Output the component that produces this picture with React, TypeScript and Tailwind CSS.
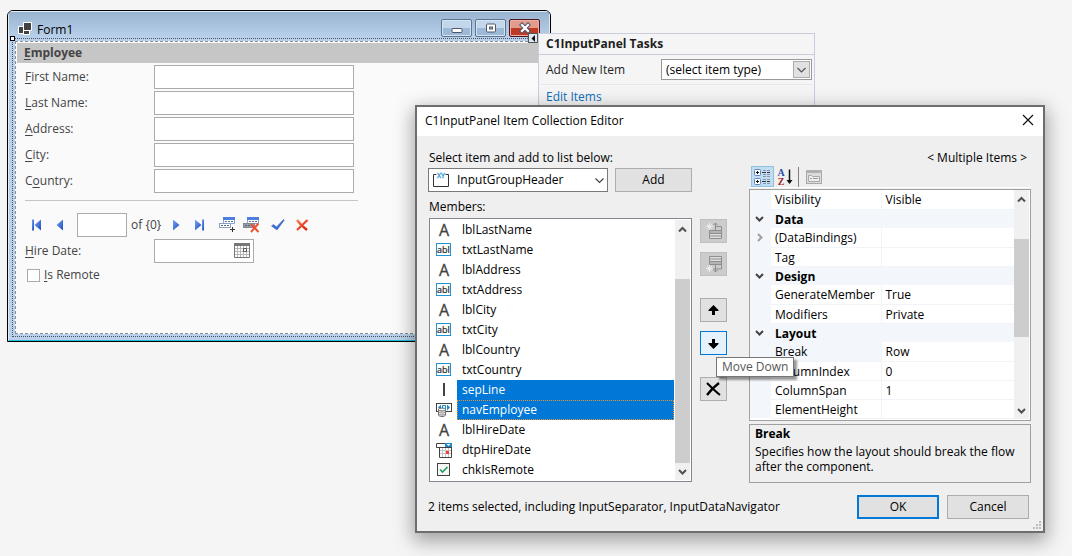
import { useState } from "react";
import type { ReactNode } from "react";

type MemberKind = "label" | "text" | "line" | "nav" | "date" | "check";

const members: { name: string; kind: MemberKind }[] = [
  { name: "lblLastName", kind: "label" },
  { name: "txtLastName", kind: "text" },
  { name: "lblAddress", kind: "label" },
  { name: "txtAddress", kind: "text" },
  { name: "lblCity", kind: "label" },
  { name: "txtCity", kind: "text" },
  { name: "lblCountry", kind: "label" },
  { name: "txtCountry", kind: "text" },
  { name: "sepLine", kind: "line" },
  { name: "navEmployee", kind: "nav" },
  { name: "lblHireDate", kind: "label" },
  { name: "dtpHireDate", kind: "date" },
  { name: "chkIsRemote", kind: "check" },
];

type PropRow = { name: string; value?: string; category?: boolean; expandable?: boolean; current?: boolean };

const properties: PropRow[] = [
  { name: "Visibility", value: "Visible" },
  { name: "Data", category: true },
  { name: "(DataBindings)", value: "", expandable: true },
  { name: "Tag", value: "" },
  { name: "Design", category: true },
  { name: "GenerateMember", value: "True" },
  { name: "Modifiers", value: "Private" },
  { name: "Layout", category: true },
  { name: "Break", value: "Row", current: true },
  { name: "ColumnIndex", value: "0" },
  { name: "ColumnSpan", value: "1" },
  { name: "ElementHeight", value: "" },
];

const fields: { id: string; before: string; key: string; after: string }[] = [
  { id: "first", before: "", key: "F", after: "irst Name:" },
  { id: "last", before: "", key: "L", after: "ast Name:" },
  { id: "address", before: "", key: "A", after: "ddress:" },
  { id: "city", before: "", key: "C", after: "ity:" },
  { id: "country", before: "C", key: "o", after: "untry:" },
];

function Mnemonic({ before = "", letter, after }: { before?: string; letter: string; after: string }) {
  return (
    <>
      {before}
      <span className="underline underline-offset-2">{letter}</span>
      {after}
    </>
  );
}

function Chevron({ dir, className = "" }: { dir: "up" | "down" | "right"; className?: string }) {
  const d = { up: "M1 6.5 4.5 3 8 6.5", down: "M1 3 4.5 6.5 8 3", right: "M3 1 6.5 4.5 3 8" }[dir];
  return (
    <svg width="9" height="9" viewBox="0 0 9 9" className={className} aria-hidden="true">
      <path d={d} fill="none" stroke="currentColor" strokeWidth="2" />
    </svg>
  );
}

function MemberIcon({ kind }: { kind: MemberKind }) {
  return (
    <svg width="16" height="16" viewBox="0 0 16 16" aria-hidden="true" className="shrink-0">
      {kind === "label" && (
        <text x="8" y="14" textAnchor="middle" fontSize="16" fill="#424242" stroke="#424242" strokeWidth=".3">
          A
        </text>
      )}
      {kind === "text" && (
        <>
          <rect x=".5" y="1.5" width="14" height="12" fill="#fff" stroke="#1e95d4" />
          <text x="7.5" y="11" textAnchor="middle" fontSize="9" fill="#222" stroke="#222" strokeWidth=".2">
            abl
          </text>
        </>
      )}
      {kind === "line" && <path d="M8 1v13" stroke="#424242" strokeWidth="2" />}
      {kind === "nav" && (
        <>
          <rect x=".5" y="1.5" width="15" height="8" fill="#fff" stroke="#424242" />
          <path d="M5 2.500v6L2 5.500zM11 2.500v6l3-3z" fill="#1e88c9" />
          <path d="M6.500 3.500h3v4h-3z" fill="#fff" stroke="#1e88c9" />
          <path d="M2.500 7.500V13c0 .8 1.500 1.500 3.500 1.500S9.500 13.800 9.500 13V7.500z" fill="#f2f2f2" stroke="#666" />
          <ellipse cx="6" cy="7.500" rx="3.500" ry="1.500" fill="#fff" stroke="#666" />
          <path d="M2.500 9.500c0 2 7 2 7 0M2.500 11.500c0 2 7 2 7 0" fill="none" stroke="#888" />
        </>
      )}
      {kind === "date" && (
        <>
          <path d="M.5 1.500h15v14h-12v-10h-3z" fill="#fff" stroke="#424242" />
          <path d="M9 1h7v4H9z" fill="#1e88c9" />
          <path d="M10.500 2h4l-2 2z" fill="#fff" />
          <path d="M3 5.500h13" stroke="#424242" />
          <path d="M6.500 6v9M9.500 6v9M12.500 6v9M4 8.500h11M4 11.500h11" stroke="#c4c4c4" />
          <rect x="10" y="9" width="3" height="3" fill="#f04040" />
        </>
      )}
      {kind === "check" && (
        <>
          <rect x="1.500" y="1.500" width="12" height="12" fill="#f7f7f7" stroke="#424242" />
          <path d="m4 7.500 2.500 2.500L11.500 5" fill="none" stroke="#21a062" strokeWidth="1.700" />
        </>
      )}
    </svg>
  );
}

function NavButton({ label, children }: { label: string; children: ReactNode }) {
  return (
    <button type="button" aria-label={label} className="flex h-6 w-6 items-center justify-center">
      <svg width="18" height="16" viewBox="0 0 18 16" aria-hidden="true">
        <defs>
          <linearGradient id="navBlue" x1="0" y1="0" x2="1" y2="1">
            <stop offset="0" stopColor="#79a6f5" />
            <stop offset="1" stopColor="#1a49bd" />
          </linearGradient>
          <linearGradient id="navRed" x1="0" y1="0" x2="1" y2="1">
            <stop offset="0" stopColor="#ff7a50" />
            <stop offset="1" stopColor="#d81a08" />
          </linearGradient>
        </defs>
        {children}
      </svg>
    </button>
  );
}

function RowsIcon({ dim = false }: { dim?: boolean }) {
  return (
    <>
      <rect x="5.500" y=".5" width="11" height="6" fill="#fff" stroke="#8aa8dc" />
      <path d="M5 0h12v3H5z" fill="#4d80dc" />
      <path d="M7 4.500h2m1 0h2m1 0h2" stroke="#5b6f94" />
      <rect x="1.500" y="6.500" width="11" height="4" fill={dim ? "#9a9da5" : "#fff"} stroke={dim ? "#85888f" : "#8c9fbf"} />
      <path d="M3 8.500h2m1 0h2m1 0h2" stroke="#46648f" />
    </>
  );
}

function FormWindow() {
  return (
    <section
      aria-label="Form1"
      className="absolute left-[7px] top-[10px] w-[544px] overflow-hidden rounded-t-md border border-black bg-[#b9d1ea]"
    >
      <div className="border border-[#dfeaf5] border-b-[#1fc0dc] px-[3px] pb-[3px]">
        <header className="-mx-[3px] flex h-[26px] items-end bg-linear-to-b from-[#99b4d1] to-[#b9d1ea] pl-[9px] pr-[9px]">
          <svg width="16" height="16" viewBox="0 0 16 16" aria-hidden="true">
            <path d="M5.500.500h8v8h-2v4h-6v-1h-5v-7h5z" fill="#fff" stroke="#fff" />
            <path d="M6 1h7v7H6zM1 5h4v6H1zM6 9h5v3H6z" fill="#424242" />
          </svg>
          <h1 className="ml-[3px] flex-1 text-[12px] leading-[17px] text-black">Form1</h1>
          <div className="flex gap-[3px] pb-px">
            <button type="button" aria-label="Minimize" className="flex h-[18px] w-[31px] items-center justify-center rounded-[2px] border border-[#5d748f] bg-linear-to-b from-[#c3d7ec] from-50% to-[#9db9d8] to-50% shadow-[inset_0_0_0_1px_#d5e4f3]">
              <svg width="12" height="12" viewBox="0 0 12 12" aria-hidden="true">
                <rect x="1" y="6.500" width="10" height="4" rx="1" fill="#fff" stroke="#4f5667" />
              </svg>
            </button>
            <button type="button" aria-label="Maximize" className="flex h-[18px] w-[31px] items-center justify-center rounded-[2px] border border-[#5d748f] bg-linear-to-b from-[#c3d7ec] from-50% to-[#9db9d8] to-50% shadow-[inset_0_0_0_1px_#d5e4f3]">
              <svg width="12" height="12" viewBox="0 0 12 12" aria-hidden="true">
                <rect x="1.500" y="2" width="9" height="8" rx="1" fill="#fff" stroke="#4f5667" />
                <rect x="4.500" y="5" width="3" height="2" fill="#9db9d8" stroke="#4f5667" />
              </svg>
            </button>
            <button type="button" aria-label="Close form" className="flex h-[18px] w-[31px] items-center justify-center rounded-[2px] border border-[#4b1620] bg-linear-to-b from-[#e39b8c] from-50% to-[#bf3a25] to-50% shadow-[inset_0_0_0_1px_#e9b0a5]">
              <svg width="12" height="12" viewBox="0 0 12 12" aria-hidden="true">
                <path d="m3 3 6 6M9 3 3 9" stroke="#4f5667" strokeWidth="4.200" strokeLinecap="square" />
                <path d="m3 3 6 6M9 3 3 9" stroke="#fff" strokeWidth="2.200" strokeLinecap="square" />
              </svg>
            </button>
          </div>
        </header>
        <div className="border border-dotted border-[#4a5460] p-[2px]">
          <div className="border border-dashed border-[#8a8f96] bg-white">
            <form className="min-h-[291px] bg-[#fafafa] pt-px text-[#444]" onSubmit={(e) => e.preventDefault()}>
              <h2 className="ml-px h-5 bg-[#c6c6c6] pl-[7px] text-[12px] font-bold leading-5">
                <Mnemonic letter="E" after="mployee" />
              </h2>
              <div className="flex flex-col gap-[2px] pl-[9px] pt-[2px]">
                {fields.map((f) => (
                  <div key={f.id} className="flex items-center">
                    <label htmlFor={f.id} className="w-[129px] leading-4">
                      <Mnemonic before={f.before} letter={f.key} after={f.after} />
                    </label>
                    <input id={f.id} type="text" className="h-6 w-[200px] border border-[#ababab] bg-white px-1" />
                  </div>
                ))}
              </div>
              <hr className="ml-[9px] mt-[7px] w-[333px] border-[#c6c6c6]" />
              <div className="mt-3 flex items-center pl-2">
                <NavButton label="First record">
                  <path d="M5 2.500h2v11H5z" fill="url(#navBlue)" />
                  <path d="M14 2.500v11L7.500 8z" fill="url(#navBlue)" />
                </NavButton>
                <NavButton label="Previous record">
                  <path d="M12 2.500v11L5.500 8z" fill="url(#navBlue)" />
                </NavButton>
                <input type="text" aria-label="Record number" className="ml-[5px] h-6 w-[50px] border border-[#ababab] bg-white px-1" />
                <span className="mx-1 w-[29px] whitespace-nowrap leading-4">of {"{0}"}</span>
                <NavButton label="Next record">
                  <path d="M6 2.500v11L12.500 8z" fill="url(#navBlue)" />
                </NavButton>
                <NavButton label="Last record">
                  <path d="M4 2.500v11l6.500-5.500z" fill="url(#navBlue)" />
                  <path d="M11 2.500h2v11h-2z" fill="url(#navBlue)" />
                </NavButton>
                <div className="ml-[3px] flex">
                  <NavButton label="Add record">
                    <RowsIcon />
                    <path d="M14.500 10v5M12 12.500h5" stroke="#333" />
                  </NavButton>
                  <NavButton label="Delete record">
                    <RowsIcon dim />
                    <path d="m9 7 7.500 8M16.500 6.500 9 15" stroke="#f0502e" strokeWidth="2" />
                  </NavButton>
                </div>
                <div className="ml-[3px] flex">
                  <NavButton label="Apply">
                    <path d="m2.500 9 2-1.500 3 2.500L14.500 2.500l.8.500L8 13z" fill="#3d6fd8" stroke="#2b57b8" strokeWidth=".5" />
                  </NavButton>
                  <NavButton label="Cancel changes">
                    <path d="M4 3c2 3 6 7 10 10M14.500 3 4 13" fill="none" stroke="url(#navRed)" strokeWidth="2.300" />
                  </NavButton>
                </div>
              </div>
              <div className="mt-[2px] flex items-center pl-[9px]">
                <label htmlFor="hire" className="w-[129px] leading-4">
                  <Mnemonic letter="H" after="ire Date:" />
                </label>
                <div className="flex h-6 w-[100px] items-center border border-[#ababab] bg-white pr-[3px]">
                  <input id="hire" type="text" className="h-full w-0 flex-1 px-1 outline-none" />
                  <button type="button" aria-label="Open calendar">
                    <svg width="16" height="16" viewBox="0 0 16 16" aria-hidden="true">
                      <path d="M.5.500h15v14H.5z" fill="#fff" stroke="#777" />
                      <path d="M0 0h16v3H0z" fill="#777" />
                      <path d="M3.500 3v11M6.500 3v11M9.500 3v11M12.500 3v11M1 5.500h14M1 8.500h14M1 11.500h14" stroke="#b5b5b5" />
                      <path d="M9.500 5.500h3v3h-3z" fill="#fff" stroke="#555" />
                    </svg>
                  </button>
                </div>
              </div>
              <label className="ml-[11px] mt-1 flex items-center gap-1 leading-4">
                <input type="checkbox" className="h-[13px] w-[13px] appearance-none border border-[#ababab] bg-white checked:bg-[#555]" />
                <span>
                  <Mnemonic letter="I" after="s Remote" />
                </span>
              </label>
            </form>
          </div>
        </div>
      </div>
    </section>
  );
}

function TasksPanel() {
  return (
    <section aria-label="C1InputPanel Tasks" className="absolute left-[538px] top-[33px] w-[277px] border border-[#ccccdf] bg-[#f5f5f5] pb-3 text-[#1e1e1e]">
      <h2 className="h-[21px] border-b border-[#ccccdf] pl-[7px] text-[12px] font-bold leading-5">C1InputPanel Tasks</h2>
      <div className="mx-[2px] flex items-center border-b border-[#e6e6ee] py-1 pl-[5px]">
        <label htmlFor="itemType" className="flex-1">Add New Item</label>
        <div className="relative w-[151px]">
          <select id="itemType" className="block h-[21px] w-full appearance-none border border-[#999] bg-white pl-1 leading-4 text-black">
            <option>(select item type)</option>
          </select>
          <span className="pointer-events-none absolute bottom-[2px] right-[2px] top-[2px] flex w-[17px] items-center justify-center border border-[#adadad] bg-[#e1e1e1] text-[#555]">
            <svg width="9" height="9" viewBox="0 0 9 9" aria-hidden="true">
              <path d="m.5 3 4 4 4-4" fill="none" stroke="currentColor" strokeWidth="1.200" />
            </svg>
          </span>
        </div>
      </div>
      <a href="#edit-items" className="ml-[7px] mt-1 inline-block leading-4 text-[#0e70c0]">Edit Items</a>
    </section>
  );
}

function ScrollTrack({ children }: { children: ReactNode }) {
  return (
    <div aria-hidden="true" className="mr-px flex w-[15px] shrink-0 flex-col items-center bg-[#f0f0f0] text-[#505050]">
      <Chevron dir="up" className="my-[5px] shrink-0" />
      {children}
      <Chevron dir="down" className="my-1 shrink-0" />
    </div>
  );
}

const toolButton = "flex h-6 w-[27px] items-center justify-center border";

function MoveButtons() {
  return (
    <div className="ml-2 mt-[83px] flex w-[27px] flex-col">
      <button type="button" disabled aria-label="Insert above" className={`${toolButton} border-[#bfbfbf] bg-[#cccccc]`}>
        <svg width="18" height="18" viewBox="0 0 18 18" aria-hidden="true">
          <path d="M5 9h11v2H5z" fill="#b4b4b4" />
          <path d="M5 12h11v4H5z" fill="#dedede" />
          <path d="M4.500 8.500v8h12v-8zM4.500 11.500h12M4.500 14h12M10.500 8V1m-2 2 2-2 2 2M11 4.500h5.500v4" fill="none" stroke="#8e8e8e" />
          <path d="M4.500 1v7M1 4.500h7M2 2l5 5M7 2 2 7" stroke="#ececec" />
        </svg>
      </button>
      <button type="button" disabled aria-label="Insert below" className={`${toolButton} mt-[9px] border-[#bfbfbf] bg-[#cccccc]`}>
        <svg width="18" height="18" viewBox="0 0 18 18" aria-hidden="true">
          <path d="M5 2h11v4H5z" fill="#dedede" />
          <path d="M5 7h11v2H5z" fill="#b4b4b4" />
          <path d="M4.500 1.500v8h12v-8zM4.500 4h12M4.500 6.500h12M16.500 9v5H8M10.500 10v7m-2-2 2 2 2-2" fill="none" stroke="#8e8e8e" />
          <path d="M4.500 10v7M1 13.500h7M2 11l5 5M7 11l-5 5" stroke="#ececec" />
        </svg>
      </button>
      <button type="button" aria-label="Move Up" className={`${toolButton} mt-[22px] border-[#adadad] bg-[#e1e1e1]`}>
        <svg width="11" height="11" viewBox="0 0 11 11" aria-hidden="true">
          <path d="M5.500 0 10.500 5v1H7v4H4V6H.5V5z" fill="#000" />
        </svg>
      </button>
      <button type="button" aria-describedby="tip" aria-label="Move Down" className={`${toolButton} relative mt-[9px] border-[#0078d7] bg-[#e5f1fb]`}>
        <svg width="11" height="11" viewBox="0 0 11 11" aria-hidden="true">
          <path d="M5.500 11 10.500 6V5H7V1H4v4H.5v1z" fill="#000" />
        </svg>
        <span
          id="tip"
          role="tooltip"
          className="absolute left-[15px] top-[25px] z-10 whitespace-nowrap border border-[#767676] bg-white px-[5px] text-[12px] leading-[18px] text-[#575757] shadow-[3px_3px_2px_rgba(0,0,0,0.4)]"
        >
          Move Down
        </span>
      </button>
      <button type="button" aria-label="Remove" className={`${toolButton} mt-[22px] border-[#adadad] bg-[#e1e1e1]`}>
        <svg width="15" height="14" viewBox="0 0 15 14" aria-hidden="true">
          <path d="M1 1c3 3 8 8 13 12" fill="none" stroke="#000" strokeWidth="2" />
          <path d="M13 1C9 4 4 9 1 13" fill="none" stroke="#000" strokeWidth="2.300" />
        </svg>
      </button>
    </div>
  );
}

function PropertyPane() {
  return (
    <div className="ml-[22px] flex min-w-0 flex-1 flex-col pt-[14px]">
      <p className="pr-1 text-right leading-4">&lt; Multiple Items &gt;</p>
      <div className="flex h-[22px] items-start border-b border-white pl-[2px]">
        <button type="button" aria-label="Categorized" aria-pressed="true" className="flex h-[21px] w-[23px] items-center justify-center border border-[#92c0e0] bg-[#c2dcf2]">
          <svg width="17" height="17" viewBox="0 0 17 17" aria-hidden="true">
            <rect x=".5" y="1.500" width="6" height="6" rx="1" fill="#fff" stroke="#5a86c0" />
            <rect x=".5" y="10.500" width="6" height="6" rx="1" fill="#fff" stroke="#5a86c0" />
            <path d="M2 4.500h3M3.500 3v3M2 13.500h3M3.500 12v3" stroke="#111" />
            <path d="M8 4.500h4m1 0h3M8 13.500h4m1 0h3" stroke="#333" />
            <path d="M9 2.500h3m1 0h3M9 6.500h3m1 0h3M9 8.500h3m1 0h3M9 11.500h3m1 0h3M9 15.500h3m1 0h3" stroke="#8497ad" />
          </svg>
        </button>
        <button type="button" aria-label="Alphabetical" className="ml-[2px] flex h-[21px] w-[18px] items-center justify-center">
          <svg width="16" height="18" viewBox="0 0 16 18" aria-hidden="true" className="font-['Liberation_Serif',serif] font-bold">
            <text x="4" y="8" textAnchor="middle" fontSize="10" fill="#2b4da8">A</text>
            <text x="4" y="17" textAnchor="middle" fontSize="10" fill="#a02828">Z</text>
            <path d="M12.500 1.500V15" stroke="#111" strokeWidth="1.500" />
            <path d="M9.500 12h6l-3 4z" fill="#111" />
          </svg>
        </button>
        <span className="ml-1 mt-px h-[20px] w-px bg-[#808080]" />
        <button type="button" disabled aria-label="Property pages" className="ml-[6px] flex h-[21px] w-[18px] items-center justify-center">
          <svg width="16" height="16" viewBox="0 0 16 16" aria-hidden="true">
            <rect x=".5" y="1.500" width="15" height="13" fill="#dcdcdc" stroke="#a8a8a8" />
            <path d="M0 1h16v3H0z" fill="#b0b0b0" />
            <path d="M2.500 12.500v-6h3l1 1h7v5z" fill="#eee" stroke="#a8a8a8" />
            <path d="M4 9.500h2m1 0h5" stroke="#999" />
          </svg>
        </button>
      </div>
      <div className="mt-px flex border border-[#a0a0a0] bg-white pb-px">
        <table className="min-w-0 flex-1 table-fixed border-collapse">
          <colgroup>
            <col className="w-[21px]" />
            <col className="w-[110px]" />
            <col />
          </colgroup>
          <tbody>
            {properties.map((p) =>
              p.category ? (
                <tr key={p.name} className="h-[19px] bg-[#f3f6fb]">
                  <td className="p-0 pl-[5px] text-[#444]">
                    <Chevron dir="down" />
                  </td>
                  <th colSpan={2} scope="colgroup" className="p-0 pl-1 pt-[2px] text-left font-bold leading-4">
                    {p.name}
                  </th>
                </tr>
              ) : (
                <tr key={p.name} className="h-[19px]">
                  <td className="bg-[#f3f6fb] p-0 pl-[5px] text-[#a0a0a0]">{p.expandable && <Chevron dir="right" />}</td>
                  <th
                    scope="row"
                    className={`border-b border-r border-[#f0f3f8] p-0 pl-1 pt-[2px] text-left font-normal leading-4 ${p.current ? "bg-[#f3f6fb]" : ""}`}
                  >
                    {p.name}
                  </th>
                  <td className="border-b border-[#f0f3f8] p-0 pl-1 pt-[2px] leading-4">{p.value}</td>
                </tr>
              ),
            )}
          </tbody>
        </table>
        <ScrollTrack>
          <div className="mt-[30px] h-[98px] w-full bg-[#cdcdcd]" />
          <div className="flex-1" />
        </ScrollTrack>
      </div>
      <div className="mt-[3px] min-h-[59px] border border-[#a0a0a0] px-[5px] pt-px">
        <h3 className="text-[12px] font-bold leading-4">Break</h3>
        <p className="mt-[2px] leading-[15px]">Specifies how the layout should break the flow after the component.</p>
      </div>
    </div>
  );
}

function EditorDialog() {
  const [selected, setSelected] = useState<string[]>(["sepLine", "navEmployee"]);
  return (
    <section
      role="dialog"
      aria-labelledby="dlg-title"
      className="absolute left-[415px] top-[105px] w-[630px] border-2 border-[#6d6d6d] bg-[#efefef] text-black shadow-[0_6px_18px_2px_rgba(0,0,0,0.35)]"
    >
      <header className="flex h-[29px] items-center justify-between bg-white pl-2 pr-[9px]">
        <h2 id="dlg-title" className="pb-px text-[12px]">C1InputPanel Item Collection Editor</h2>
        <button type="button" aria-label="Close">
          <svg width="12" height="12" viewBox="0 0 12 12" aria-hidden="true" className="mb-1">
            <path d="m1 1 10 10M11 1 1 11" stroke="#111" strokeWidth="1.200" />
          </svg>
        </button>
      </header>
      <div className="flex pl-[11px] pr-3">
        <div className="w-[264px] shrink-0 pt-[14px]">
          <label htmlFor="newItem" className="ml-px block leading-4">Select item and add to list below:</label>
          <div className="mt-[2px] flex gap-[7px]">
            <div className="relative w-[180px]">
              <select id="newItem" className="block h-6 w-full appearance-none border border-[#7a7a7a] bg-white pl-[28px] text-black">
                <option>InputGroupHeader</option>
              </select>
              <svg width="16" height="16" viewBox="0 0 16 16" aria-hidden="true" className="pointer-events-none absolute left-[5px] top-1">
                <path d="M3.500 2.500h-3v12h15v-12h-3" fill="none" stroke="#333" />
                <text x="8" y="5.500" textAnchor="middle" fontSize="7" fill="#1e95d4" stroke="#1e95d4" strokeWidth=".3">XY</text>
              </svg>
              <svg width="9" height="9" viewBox="0 0 9 9" aria-hidden="true" className="pointer-events-none absolute right-[4px] top-2">
                <path d="m.5 2.500 4 4 4-4" fill="none" stroke="#444" strokeWidth="1.200" />
              </svg>
            </div>
            <button type="button" className="h-6 flex-1 border border-[#adadad] bg-[#e1e1e1]">Add</button>
          </div>
          <h3 id="members" className="ml-px mt-[7px] text-[12px] leading-4">Members:</h3>
          <div className="ml-px mt-[3px] flex border border-[#828790] bg-white py-px">
            <ul role="listbox" aria-labelledby="members" aria-multiselectable="true" className="flex-1">
              {members.map((m) => {
                const on = selected.includes(m.name);
                return (
                  <li
                    key={m.name}
                    role="option"
                    aria-selected={on}
                    onClick={() => setSelected(on ? selected.filter((n) => n !== m.name) : [...selected, m.name])}
                    className="flex h-5 items-center gap-[5px] pl-[6px]"
                  >
                    <MemberIcon kind={m.kind} />
                    <span
                      className={`flex-1 ${on ? "bg-[#0078d7] text-white" : ""} ${
                        m.name === "navEmployee" ? "border border-dotted border-[#e8933a] pl-1 leading-[18px]" : "pl-[5px] leading-5"
                      }`}
                    >
                      {m.name}
                    </span>
                  </li>
                );
              })}
            </ul>
            <div className="ml-px flex">
              <ScrollTrack>
                <div className="mt-10 w-full flex-1 bg-[#cdcdcd]" />
              </ScrollTrack>
            </div>
          </div>
        </div>
        <MoveButtons />
        <PropertyPane />
      </div>
      <footer className="flex items-center gap-2 pb-3 pl-[11px] pr-[14px] pt-3">
        <output className="flex-1">2 items selected, including InputSeparator, InputDataNavigator</output>
        <button type="button" className="h-6 w-[82px] border-2 border-[#0078d7] bg-[#e1e1e1]">OK</button>
        <button type="button" className="h-6 w-[82px] border border-[#adadad] bg-[#e1e1e1]">Cancel</button>
      </footer>
      <svg width="8" height="8" viewBox="0 0 8 8" aria-hidden="true" className="absolute bottom-[2px] right-[2px]">
        <path d="M6 0h2v2H6zM3 3h2v2H3zM6 3h2v2H6zM0 6h2v2H0zM3 6h2v2H3zM6 6h2v2H6z" fill="#bdbdbd" />
      </svg>
    </section>
  );
}

export default function App() {
  return (
    <main className="relative min-h-screen overflow-hidden bg-[#f5f5f5] font-['Open_Sans','Noto_Sans',sans-serif] text-[12px]">
      <FormWindow />
      <span aria-hidden="true" className="absolute left-[10px] top-[36px] h-[5px] w-[5px] border border-black bg-white" />
      <TasksPanel />
      <button type="button" aria-label="Smart tag" className="absolute left-[528px] top-[33px] flex h-[10px] w-[10px] items-center justify-center border border-[#555] bg-[#dce9f5]">
        <svg width="5" height="7" viewBox="0 0 5 7" aria-hidden="true">
          <path d="M4 0v7L.5 3.500z" fill="#111" />
        </svg>
      </button>
      <EditorDialog />
    </main>
  );
}
